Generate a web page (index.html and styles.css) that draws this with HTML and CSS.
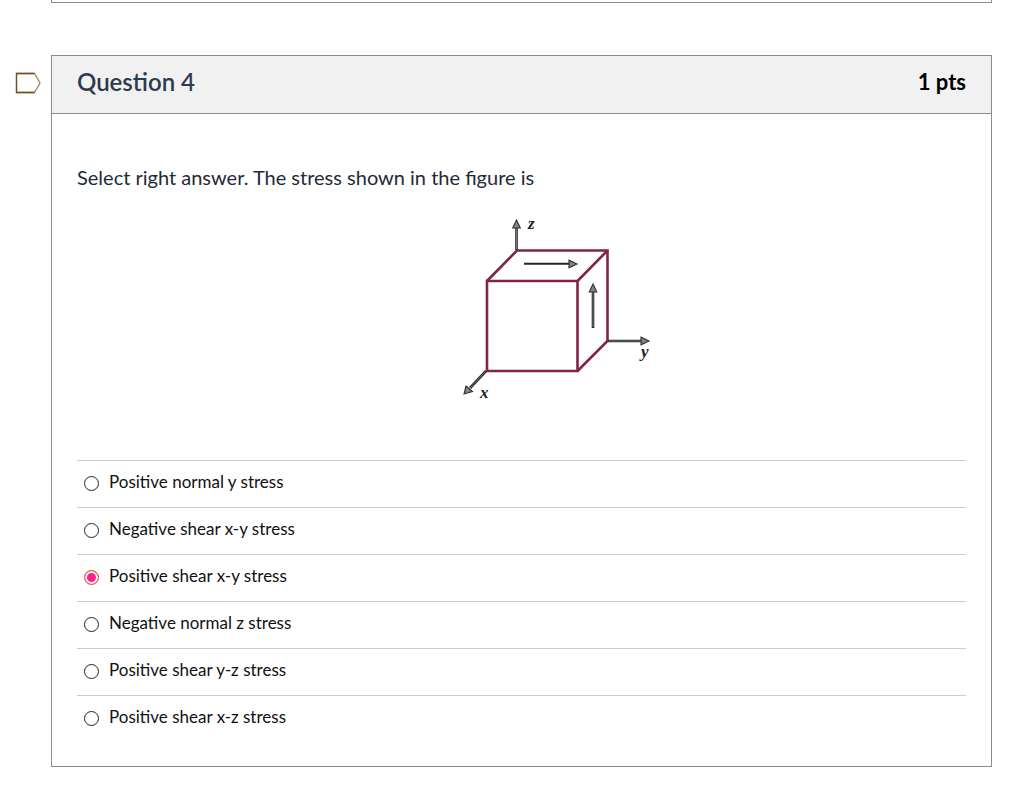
FILE: index.html
```html
<!DOCTYPE html>
<html lang="en">
<head>
  <meta charset="utf-8">
  <title>Question 4</title>
  <link rel="stylesheet" href="styles.css">
</head>
<body>
  <div class="previous-question"></div>

  <div class="question-row">
    <button class="flag" type="button" aria-label="Flag question 4">
      <svg width="26" height="22" viewBox="0 0 26 22">
        <path d="M1.5 1.5H19.5L25 11L19.5 20.5H1.5Z" fill="#fff" stroke="#a58557" stroke-width="1.3"/>
        <path d="M19.5 1.5H1.5V20.5H19.5" fill="none" stroke="#70501f" stroke-width="1.3"/>
      </svg>
    </button>

    <form class="question">
      <header class="question-header">
        <h2 class="question-name">Question 4</h2>
        <span class="question-points">1 pts</span>
      </header>

      <div class="question-body">
        <p class="question-text">Select right answer. The stress shown in the figure is</p>

        <svg class="figure" width="260" height="195" viewBox="392 210 260 195" role="img" aria-label="Stress element with x, y and z axes">
          <!-- axes and stress arrows -->
          <g fill="none" stroke="#242424" stroke-width="2.6">
            <path d="M516.5 250V228"/>
            <path d="M608 341H642"/>
            <path d="M486 371L470 388"/>
            <path stroke-width="2" d="M524 263.8H570"/>
            <path d="M593 328V292"/>
          </g>
          <g fill="none" stroke="#777" stroke-width="1">
            <path d="M516.5 249V228"/>
            <path d="M609 341H642"/>
            <path d="M485 372L470 388"/>
            <path d="M593 327V292"/>
          </g>
          <g fill="#858585" stroke="#303030" stroke-width="1.1">
            <path d="M516.5 220L520.3 228H512.7Z"/>
            <path d="M649 341L641 337.2V344.8Z"/>
            <path d="M464 394L466 386L472.5 391.5Z"/>
            <path d="M577 264L569 260.2V267.8Z"/>
            <path d="M593 284L596.8 292H589.2Z"/>
          </g>
          <!-- cube -->
          <g fill="none" stroke="#802449" stroke-width="2.6">
            <path d="M487 281H577.5V371H487Z"/>
            <path d="M487 281L517 250.5H607.5V341L577.5 371"/>
            <path d="M577.5 281L607.5 250.5"/>
          </g>
          <g class="axis-label">
            <text x="528" y="229">z</text>
            <text x="641" y="357">y</text>
            <text x="480" y="398">x</text>
          </g>
        </svg>

        <div class="answers">
          <label class="answer"><input type="radio" name="q4" value="1"> Positive normal y stress</label>
          <label class="answer"><input type="radio" name="q4" value="2"> Negative shear x-y stress</label>
          <label class="answer"><input type="radio" name="q4" value="3" checked> Positive shear x-y stress</label>
          <label class="answer"><input type="radio" name="q4" value="4"> Negative normal z stress</label>
          <label class="answer"><input type="radio" name="q4" value="5"> Positive shear y-z stress</label>
          <label class="answer"><input type="radio" name="q4" value="6"> Positive shear x-z stress</label>
        </div>
      </div>
    </form>
  </div>
</body>
</html>
```
FILE: styles.css
```css
* {
  box-sizing: border-box;
}

body {
  margin: 0;
  padding: 0 32px 24px 15px;
  background-color: #fff;
  color: #111;
  font-family: Lato, "Liberation Sans", sans-serif;
}

.previous-question {
  height: 3px;
  margin: 0 0 52px 36px;
  border: 1px solid #8c8c8c;
  border-top: none;
}

.question-row {
  display: flex;
  align-items: flex-start;
  gap: 10px;
}

.flag {
  margin: 17px 0 0;
  padding: 0;
  border: none;
  background: none;
  cursor: pointer;
}

.flag svg {
  display: block;
}

.question {
  flex: 1;
  border: 1px solid #8c8c8c;
}

.question-header {
  display: flex;
  justify-content: space-between;
  align-items: center;
  padding: 10px 25px 15px;
  background-color: #f1f1f1;
  border-bottom: 1px solid #8c8c8c;
}

.question-name {
  margin: 0;
  color: #2d3b4e;
  font-size: 24px;
  font-weight: 600;
  line-height: 32px;
}

.question-points {
  color: #000;
  font-size: 22px;
  font-weight: 700;
  line-height: 32px;
}

.question-body {
  padding: 47px 25px 24px;
}

.question-text {
  margin: 0;
  color: #1f2a38;
  font-size: 20px;
  line-height: 32px;
}

.figure {
  display: block;
  margin: 17px auto 55px;
}

.axis-label {
  fill: #222;
  font-family: "Liberation Serif", serif;
  font-size: 17px;
  font-style: italic;
  font-weight: bold;
}

.answer {
  display: flex;
  align-items: center;
  gap: 10px;
  height: 47px;
  padding: 0 7px 5px;
  border-top: 1px solid #ccc;
  font-size: 17px;
  line-height: 24px;
  cursor: pointer;
}

.answer input {
  appearance: none;
  width: 15px;
  height: 15px;
  margin: 3px 0 0;
  border: 1px solid #222;
  border-radius: 50%;
  background-color: #fff;
}

.answer input:checked {
  border-color: #e8602a;
  background-color: #ff1f8a;
  box-shadow: inset 0 0 0 2px #fff;
}
```
